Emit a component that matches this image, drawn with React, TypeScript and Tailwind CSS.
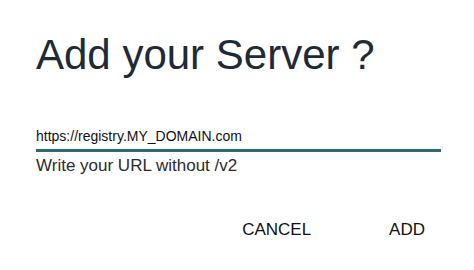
const App = () => {
  return (
    <div className="h-[270px] w-[474px] bg-white font-['Liberation_Sans',Arial,sans-serif]">
      <div className="flex flex-col pl-[36px] pr-[33px] pt-[30px]">
        <h1 className="text-[42px] leading-[50px] text-[#1e2a35]">Add your Server ?</h1>
        <div className="mt-[48px] border-b-[3px] border-[#2f6870] pb-[5px] text-[14px] leading-[16px] text-[#111]">
          https://registry.MY_DOMAIN.com
        </div>
        <div className="mt-[4px] text-[17px] leading-[19px] text-[#2b2b2b]">Write your URL without /v2</div>
        <div className="mt-[45px] flex justify-end pr-[16px] text-[17px] leading-[19px] text-[#111]">
          <button className="mr-[78px]">CANCEL</button>
          <button>ADD</button>
        </div>
      </div>
    </div>
  );
};

export default App;
